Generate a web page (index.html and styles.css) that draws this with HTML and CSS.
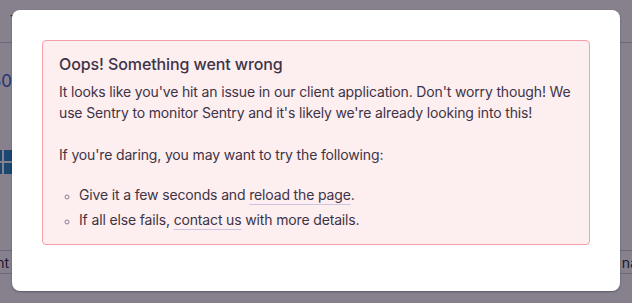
FILE: index.html
```html
<!DOCTYPE html>
<html lang="en">
<head>
  <meta charset="UTF-8" />
  <meta name="viewport" content="width=device-width, initial-scale=1.0" />
  <title>Error</title>
  <link rel="stylesheet" href="styles.css">
</head>
<body>
  <div class="page">
    <div class="page-header"><span class="tab">T</span></div>
    <div class="page-body">
      <div class="count">50</div>
      <div class="win-logo">
        <span></span><span></span><span></span><span></span>
      </div>
    </div>
    <div class="page-footer">
      <span class="foot-left">ent</span>
      <span class="foot-right">na</span>
    </div>
  </div>

  <div class="overlay"></div>

  <div class="modal">
    <div class="alert">
      <h2>Oops! Something went wrong</h2>
      <p>It looks like you've hit an issue in our client application. Don't worry though! We use Sentry to monitor Sentry and it's likely we're already looking into this!</p>
      <p class="lead">If you're daring, you may want to try the following:</p>
      <ul>
        <li>Give it a few seconds and <a href="#">reload the page</a>.</li>
        <li>If all else fails, <a href="#">contact us</a> with more details.</li>
      </ul>
    </div>
  </div>
</body>
</html>
```

FILE: styles.css
```css
* { box-sizing: border-box; }
body { margin: 0; width: 632px; height: 303px; overflow: hidden; font-family: Inter, "Noto Sans", sans-serif; background: #fff; position: relative; }

/* page under the modal */
.page { height: 303px; display: flex; flex-direction: column; color: #2b2233; }
.page-header { height: 43px; border-bottom: 1px solid #ccc5d6; padding: 12px 0 0 10px; font-size: 14px; }
.page-body { flex: 1; padding: 28px 0 0 0; }
.count { font-size: 17px; color: #3d59c9; margin-left: -9px; }
.win-logo { display: grid; grid-template-columns: 12px 12px; gap: 2px; width: 26px; margin: 59px 0 0 -10px; }
.win-logo span { height: 11px; background: #1d84c5; }
.page-footer { height: 24px; border-top: 1px solid #ccc5d6; border-bottom: 1px solid #ccc5d6; margin-bottom: 29px; display: flex; justify-content: space-between; align-items: center; font-size: 14px; }
.foot-left { margin-left: -12px; }
.foot-right { margin-right: -6px; }

.overlay { position: absolute; inset: 0; background: rgba(27, 17, 40, 0.53); }

/* modal */
.modal { position: absolute; left: 12px; top: 10px; width: 608px; height: 281px; background: #fff; border-radius: 8px; padding: 30px; box-shadow: 0 1px 2px rgba(20, 10, 30, 0.35); }
.alert { background: #fdeef0; border: 1px solid #f5a0a8; border-radius: 4px; padding: 11px 16px 10px; color: #3e3446; font-size: 14px; line-height: 21px; letter-spacing: -0.15px; }
.alert h2 { margin: 0 0 5px; font-size: 16px; line-height: 24px; font-weight: 500; color: #3e3446; letter-spacing: -0.1px; }
.alert p { margin: 0 0 21px; }
.alert p.lead { margin-bottom: 19px; }
.alert ul { margin: 0; padding-left: 20px; list-style: circle; }
.alert li { margin-bottom: 4px; padding-left: 0; }
.alert li::marker { color: #8a7f96; font-size: 11px; }
.alert a { color: #3e3446; text-decoration: underline; text-decoration-color: #cfc3e0; text-underline-offset: 4px; }
```
